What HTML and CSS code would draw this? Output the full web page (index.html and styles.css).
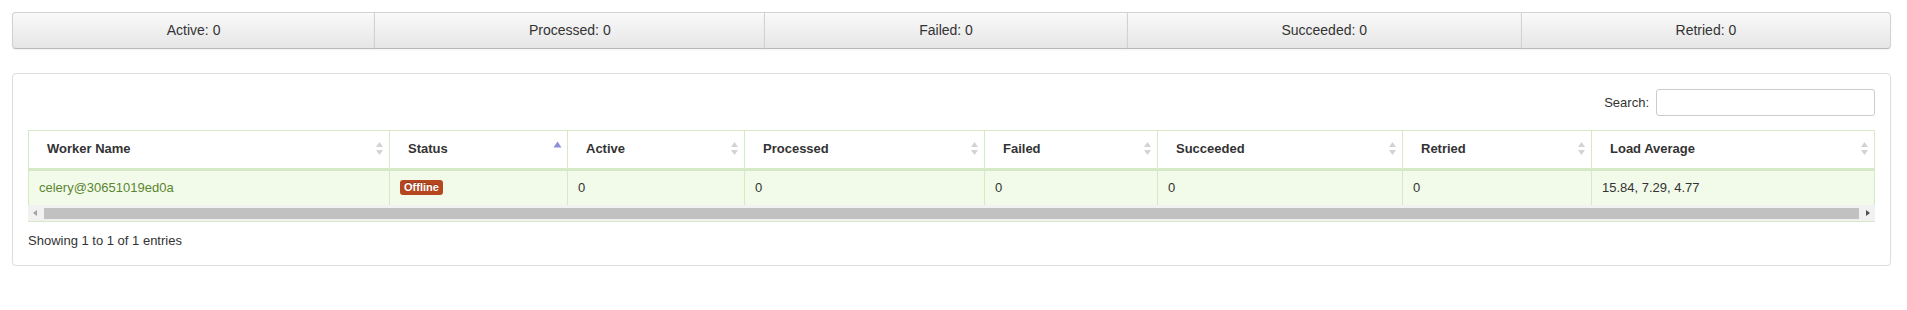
FILE: index.html
```html
<!DOCTYPE html>
<html lang="en">
<head>
    <meta charset="UTF-8">
    <meta name="viewport" content="width=device-width, initial-scale=1.0">
    <title>Flower</title>
    <link rel="stylesheet" href="styles.css">
</head>
<body>
<div class="page">
    <div class="btn-group">
        <a class="btn" href="#">Active: <span>0</span></a>
        <a class="btn" href="#">Processed: <span>0</span></a>
        <a class="btn" href="#">Failed: <span>0</span></a>
        <a class="btn" href="#">Succeeded: <span>0</span></a>
        <a class="btn" href="#">Retried: <span>0</span></a>
    </div>

    <div class="panel">
        <div class="toolbar">
            <label class="search">Search: <input type="search"></label>
        </div>

        <div class="scroll">
            <table class="workers">
                <colgroup>
                    <col style="width: 361px">
                    <col style="width: 178px">
                    <col style="width: 177px">
                    <col style="width: 240px">
                    <col style="width: 173px">
                    <col style="width: 245px">
                    <col style="width: 189px">
                    <col>
                </colgroup>
                <thead>
                    <tr>
                        <th><div class="th">Worker Name <svg class="sort" width="9" height="16" viewBox="0 0 9 16"><polygon points="4.5,1 8,6 1,6" fill="#d3d3d3"/><polygon points="1,9 8,9 4.5,14" fill="#d3d3d3"/></svg></div></th>
                        <th><div class="th">Status <svg class="sort" width="9" height="16" viewBox="0 0 9 16"><polygon points="4.5,0.5 8.5,6.5 0.5,6.5" fill="#8f8fd9"/></svg></div></th>
                        <th><div class="th">Active <svg class="sort" width="9" height="16" viewBox="0 0 9 16"><polygon points="4.5,1 8,6 1,6" fill="#d3d3d3"/><polygon points="1,9 8,9 4.5,14" fill="#d3d3d3"/></svg></div></th>
                        <th><div class="th">Processed <svg class="sort" width="9" height="16" viewBox="0 0 9 16"><polygon points="4.5,1 8,6 1,6" fill="#d3d3d3"/><polygon points="1,9 8,9 4.5,14" fill="#d3d3d3"/></svg></div></th>
                        <th><div class="th">Failed <svg class="sort" width="9" height="16" viewBox="0 0 9 16"><polygon points="4.5,1 8,6 1,6" fill="#d3d3d3"/><polygon points="1,9 8,9 4.5,14" fill="#d3d3d3"/></svg></div></th>
                        <th><div class="th">Succeeded <svg class="sort" width="9" height="16" viewBox="0 0 9 16"><polygon points="4.5,1 8,6 1,6" fill="#d3d3d3"/><polygon points="1,9 8,9 4.5,14" fill="#d3d3d3"/></svg></div></th>
                        <th><div class="th">Retried <svg class="sort" width="9" height="16" viewBox="0 0 9 16"><polygon points="4.5,1 8,6 1,6" fill="#d3d3d3"/><polygon points="1,9 8,9 4.5,14" fill="#d3d3d3"/></svg></div></th>
                        <th><div class="th">Load Average <svg class="sort" width="9" height="16" viewBox="0 0 9 16"><polygon points="4.5,1 8,6 1,6" fill="#d3d3d3"/><polygon points="1,9 8,9 4.5,14" fill="#d3d3d3"/></svg></div></th>
                    </tr>
                </thead>
                <tbody>
                    <tr>
                        <td><a class="worker" href="#">celery@30651019ed0a</a></td>
                        <td><span class="label-offline">Offline</span></td>
                        <td>0</td>
                        <td>0</td>
                        <td>0</td>
                        <td>0</td>
                        <td>0</td>
                        <td>15.84, 7.29, 4.77</td>
                    </tr>
                </tbody>
            </table>

            <!-- horizontal scrollbar of the table -->
            <div class="hscroll">
                <span class="arrow arrow-left"></span>
                <span class="thumb"></span>
                <span class="arrow arrow-right"></span>
            </div>
        </div>

        <div class="info">Showing 1 to 1 of 1 entries</div>
    </div>
</div>
</body>
</html>
```

FILE: styles.css
```css
body {
    margin: 0;
    font-family: 'Liberation Sans', Arial, Helvetica, sans-serif;
    font-size: 13px;
    line-height: 18px;
    color: #333;
    background-color: #fff;
}
.page {
    padding: 12px 16px 0 12px;
}
.btn-group {
    display: flex;
    margin-bottom: 24px;
}
.btn {
    flex: 1 1 auto;
    text-align: center;
    padding: 8px 12px;
    font-size: 14px;
    line-height: 19px;
    color: #333;
    text-decoration: none;
    background-color: #f0f0f0;
    background-image: linear-gradient(to bottom, #f9f9f9, #e6e6e6);
    border: 1px solid #d2d2d2;
    border-bottom-color: #b8b8b8;
    box-shadow: inset 0 1px 0 rgba(255,255,255,0.3), 0 1px 2px rgba(0,0,0,0.05);
}
.btn + .btn {
    margin-left: -1px;
}
.btn:first-child {
    border-radius: 4px 0 0 4px;
}
.btn:last-child {
    border-radius: 0 4px 4px 0;
}
.panel {
    border: 1px solid #ddd;
    border-radius: 4px;
    padding: 15px;
    box-shadow: 0 1px 1px rgba(0,0,0,0.05);
}
.toolbar {
    display: flex;
    justify-content: flex-end;
    margin-bottom: 14px;
}
.search {
    display: flex;
    align-items: center;
    gap: 7px;
}
.search input {
    width: 219px;
    height: 27px;
    box-sizing: border-box;
    border: 1px solid #ccc;
    border-radius: 3px;
    padding: 4px 6px;
    font-family: inherit;
    font-size: 13px;
    margin: 0;
}
.scroll {
    overflow: hidden;
    border-bottom: 1px solid #d6e9c6;
}
.workers {
    width: 100%;
    table-layout: fixed;
    border-collapse: collapse;
}
.workers th {
    text-align: left;
    font-weight: bold;
    padding: 9px 5px 10px 18px;
    background-color: #fff;
    border: 1px solid #d6e9c6;
    border-bottom: 3px solid #d6e9c6;
}
.th {
    display: flex;
    justify-content: space-between;
    align-items: center;
}
.sort {
    flex: none;
}
.workers td {
    padding: 8px 10px;
    background-color: #f2fbea;
    border-left: 1px solid #d6e9c6;
    border-right: 1px solid #d6e9c6;
    white-space: nowrap;
}
.worker {
    color: #5a8530;
    text-decoration: none;
}
.label-offline {
    display: inline-block;
    padding: 0 4px;
    font-size: 11px;
    font-weight: bold;
    line-height: 15px;
    color: #fff;
    background-color: #b4471f;
    border-radius: 3px;
    text-shadow: 0 -1px 0 rgba(0,0,0,0.25);
    vertical-align: 1px;
}
.hscroll {
    display: flex;
    align-items: center;
    height: 16px;
    background-color: #f1f1f1;
}
.arrow {
    flex: none;
    width: 15px;
    height: 16px;
    position: relative;
}
.arrow::after {
    content: '';
    position: absolute;
    top: 4.5px;
    border-top: 3.5px solid transparent;
    border-bottom: 3.5px solid transparent;
}
.arrow-left::after {
    left: 5px;
    border-right: 4px solid #a3a3a3;
}
.arrow-right::after {
    left: 6px;
    border-left: 4px solid #505050;
}
.thumb {
    flex: 1;
    height: 11px;
    margin: 0 1px;
    background-color: #c1c1c1;
}
.info {
    padding-top: 10px;
}
```
